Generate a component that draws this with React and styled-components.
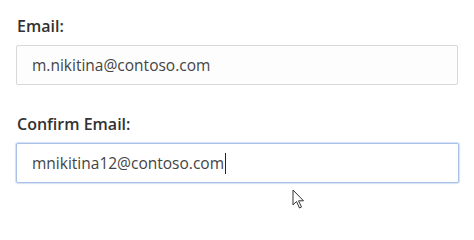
import React from "react";
import styled, { createGlobalStyle } from "styled-components";

const Global = createGlobalStyle`
  html, body { margin: 0; padding: 0; background: #ffffff; }
  body { font-family: "Open Sans", "Noto Sans", sans-serif; }
`;

const Page = styled.div`
  width: 474px;
  height: 220px;
  box-sizing: border-box;
  padding: 15px 15px 0 16px;
  display: flex;
  flex-direction: column;
  gap: 28px;
  position: relative;
  overflow: hidden;
`;

const Field = styled.div`
  display: flex;
  flex-direction: column;
  gap: 8px;
`;

const Label = styled.label`
  font-size: 16px;
  font-weight: 600;
  color: #323232;
  line-height: 22px;
  padding-left: 1px;
`;

const Input = styled.div`
  height: 40px;
  box-sizing: border-box;
  border: 1px solid ${(p) => (p.$focused ? "#a9c1e6" : "#d8d8d8")};
  box-shadow: ${(p) => (p.$focused ? "0 0 1px 1px #d4e1f5" : "none")};
  background: ${(p) => (p.$focused ? "#ffffff" : "#fdfdfd")};
  border-radius: 2px;
  display: flex;
  align-items: center;
  padding: 0 15px;
  font-size: 15.5px;
  color: #444444;
  margin-right: ${(p) => (p.$focused ? "0" : "1px")};
`;

const Caret = styled.span`
  display: inline-block;
  width: 1px;
  height: 21px;
  background: #222;
  margin-left: 1px;
`;

const Pointer = styled.svg`
  position: absolute;
  left: 292px;
  top: 189px;
`;

export default function App() {
  return (
    <>
      <Global />
      <Page>
        <Field>
          <Label>Email:</Label>
          <Input>m.nikitina@contoso.com</Input>
        </Field>
        <Field>
          <Label>Confirm Email:</Label>
          <Input $focused>
            mnikitina12@contoso.com
            <Caret />
          </Input>
        </Field>
        <Pointer width="14" height="21" viewBox="0 0 14 21">
          <path
            d="M1 1 L1 16 L4.5 12.5 L7.5 19 L9.5 18 L6.5 11.8 L11.5 11.8 Z"
            fill="#ffffff"
            stroke="#333"
            strokeWidth="1"
            strokeLinejoin="miter"
          />
        </Pointer>
      </Page>
    </>
  );
}
